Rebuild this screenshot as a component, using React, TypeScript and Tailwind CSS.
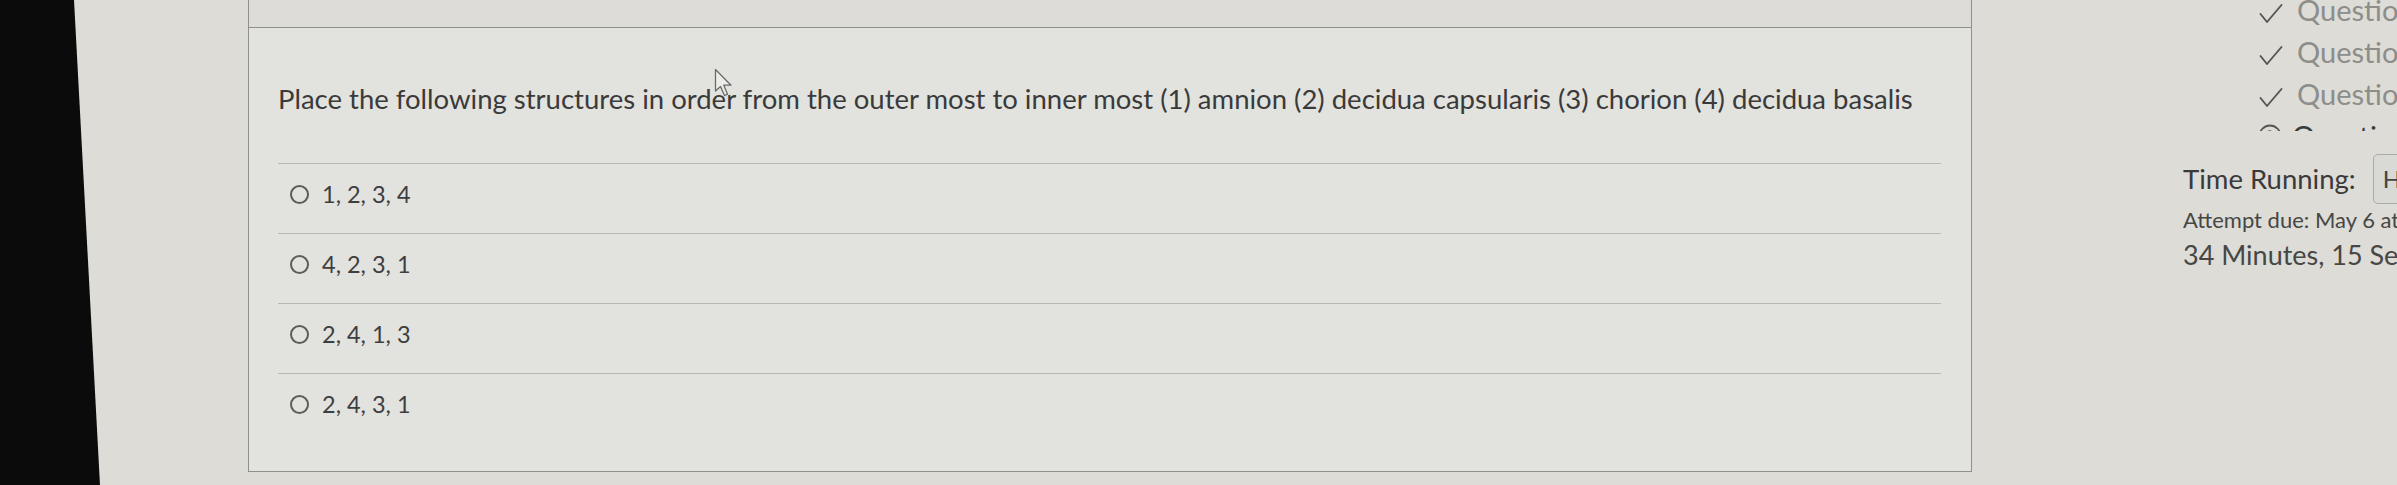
const options = ['1, 2, 3, 4', '4, 2, 3, 1', '2, 4, 1, 3', '2, 4, 3, 1'];

function Cursor() {
    return (
        <svg className="absolute left-[465px] top-[40px]" width="24" height="30" viewBox="0 0 24 30">
            <path d="M1.5 1.5 L1.5 23 L6.5 18.5 L10.5 27.5 L13.5 26.2 L9.8 17.2 L17 17.2 Z" fill="#ececE8" stroke="#6a6a6a" strokeWidth="1.3" strokeLinejoin="round" />
        </svg>
    );
}

function Tick() {
    return (
        <svg className="w-[24px] h-[22px] mt-[8px] shrink-0" viewBox="0 0 24 22" fill="none" stroke="#555553" strokeWidth="1.9" strokeLinecap="round" strokeLinejoin="round">
            <path d="M1.5 11 L8 19 L22.5 2" />
        </svg>
    );
}

function QuestionNav() {
    const items = [0, 1, 2];
    return (
        <div className="h-[131px] overflow-hidden">
            <div className="-mt-[11px]">
                {items.map((i) => (
                    <div key={i} className="h-[42px] flex items-center pl-[76px] whitespace-nowrap">
                        <Tick />
                        <span className="ml-[14px] text-[29px] leading-[42px] text-[#8d8d8a]">Question 1{i}</span>
                    </div>
                ))}
                <div className="h-[42px] flex items-center pl-[75px] whitespace-nowrap">
                    <svg className="w-[24px] h-[24px] shrink-0" viewBox="0 0 24 24" fill="none" stroke="#555553" strokeWidth="1.8">
                        <circle cx="12" cy="12" r="10.5" />
                        <path d="M8.8 9.4 a3.3 3.3 0 0 1 6.4 1.1 c0 2.2 -3.2 2.6 -3.2 4.6" />
                    </svg>
                    <span className="ml-[10px] text-[29px] leading-[42px] text-[#3a3a3a]">Question 13</span>
                </div>
            </div>
        </div>
    );
}

export default function App() {
    return (
        <div className="w-[2397px] h-[485px] overflow-hidden flex bg-[#dddcd7] font-['Lato',sans-serif]">
            {/* edge of the monitor */}
            <div className="w-[100px] h-full shrink-0 bg-[#0b0b0b] [clip-path:polygon(0_0,74px_0,100px_100%,0_100%)]" />

            <div className="ml-[148px] w-[1724px] h-[472px] shrink-0 flex flex-col bg-[#e2e2de] border-x border-b border-[#8f8f8b]">
                <div className="h-[28px] shrink-0 bg-[#dddcd8] border-b border-[#8f8f8b]" />
                <div className="relative pl-[29px] pr-[30px]">
                    <p className="mt-[52px] text-[27.5px] leading-[38px] text-[#3a3a3a] whitespace-nowrap">
                        Place the following structures in order from the outer most to inner most (1) amnion (2) decidua capsularis (3) chorion (4) decidua basalis
                    </p>
                    <div className="mt-[45px]">
                        {options.map((opt) => (
                            <div key={opt} className="h-[70px] border-t border-[#b7b7b3] flex items-center pl-[12px] pb-[8px]">
                                <span className="w-[19px] h-[19px] rounded-full border-2 border-[#5c5c5a] shrink-0" />
                                <span className="ml-[13px] text-[23.5px] text-[#3e3e3e]">{opt}</span>
                            </div>
                        ))}
                    </div>
                    <Cursor />
                </div>
            </div>

            <div className="ml-[211px] flex-1 min-w-0 overflow-hidden">
                <QuestionNav />
                <div className="mt-[23px] h-[50px] flex items-center whitespace-nowrap">
                    <span className="text-[27.5px] text-[#3a3a3a]">Time Running:</span>
                    <span className="ml-[17px] h-[50px] flex items-center px-[9px] rounded-[5px] border border-[#aaaaa6] bg-[#d9d9d5] text-[24px] text-[#444]">Hide Timer</span>
                </div>
                <p className="mt-[1px] text-[22px] leading-[29px] text-[#474745] whitespace-nowrap">Attempt due: May 6 at 11:59pm</p>
                <p className="mt-[3px] text-[27px] leading-[36px] text-[#474745] whitespace-nowrap">34 Minutes, 15 Seconds</p>
            </div>
        </div>
    );
}
